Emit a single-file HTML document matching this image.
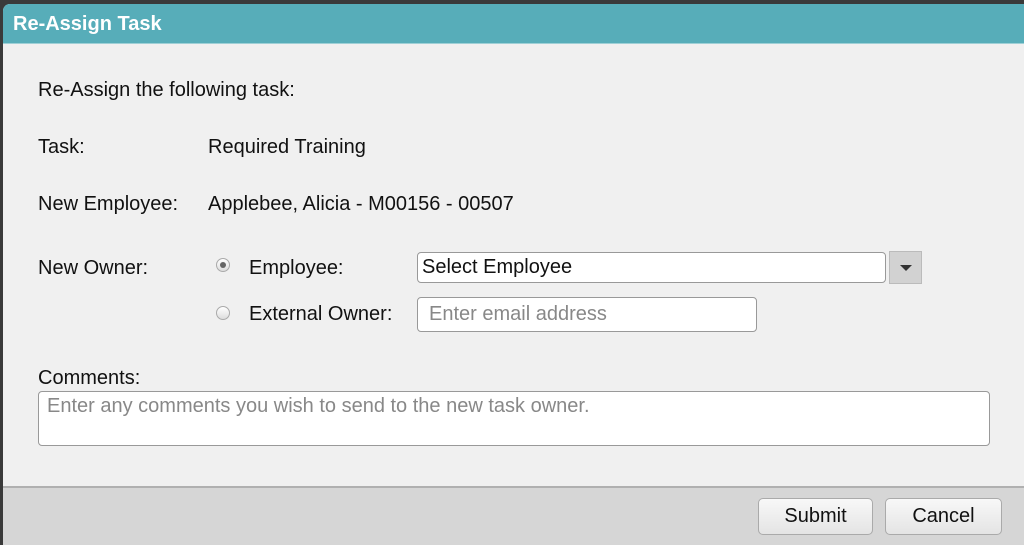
<!DOCTYPE html>
<html><head><style>
body{margin:0;width:1024px;height:545px;background:#3a3a3a;position:relative;overflow:hidden;font-family:"Liberation Sans",sans-serif;color:#111}
.dlg{position:absolute;left:3px;top:4px;width:1021px;height:541px;background:#f0f0f0;border-top-left-radius:7px;overflow:hidden}
.hd{position:absolute;left:0;top:0;right:0;height:39px;background:#57adb9;border-bottom:1px solid #9fd0d6}
.hd span{position:absolute;left:10px;top:9px;color:#fff;font-weight:bold;font-size:20px}
.t{position:absolute;font-size:20px;white-space:nowrap}
.inp{position:absolute;background:#fff;border:1px solid #999;border-radius:4px;box-sizing:border-box;font-size:20px;padding-left:4px}
.rad{position:absolute;width:14px;height:14px;border-radius:50%;border:1px solid #aaa;background:linear-gradient(#fff,#ddd);box-sizing:border-box}
.ft{position:absolute;left:0;right:0;top:482px;bottom:0;background:#d6d6d6;border-top:2px solid #b0b0b0}
.btn{position:absolute;top:10px;height:37px;border:1px solid #aaa;border-radius:5px;background:linear-gradient(#f8f8f8,#e4e4e4);box-sizing:border-box;font-size:20px;text-align:center;line-height:35px}
</style></head><body>
<div class="dlg">
<div class="hd"><span>Re-Assign Task</span></div>
<div class="t" style="left:35px;top:75px">Re-Assign the following task:</div>
<div class="t" style="left:35px;top:132px">Task:</div>
<div class="t" style="left:205px;top:132px">Required Training</div>
<div class="t" style="left:35px;top:189px">New Employee:</div>
<div class="t" style="left:205px;top:189px">Applebee, Alicia - M00156 - 00507</div>
<div class="t" style="left:35px;top:253px">New Owner:</div>
<div class="rad" style="left:213px;top:254px"><div style="width:6px;height:6px;border-radius:50%;background:#666;margin:3px"></div></div>
<div class="t" style="left:246px;top:253px">Employee:</div>
<div class="inp" style="left:414px;top:248px;width:469px;height:31px;line-height:29px">Select Employee</div>
<div style="position:absolute;left:886px;top:247px;width:33px;height:33px;background:#d2d2d2;border:1px solid #bbb;box-sizing:border-box"><div style="position:absolute;left:10px;top:13px;border-left:6px solid transparent;border-right:6px solid transparent;border-top:6px solid #333"></div></div>
<div class="rad" style="left:213px;top:302px"></div>
<div class="t" style="left:246px;top:299px">External Owner:</div>
<div class="inp" style="left:414px;top:293px;width:340px;height:35px;line-height:33px;color:#888;padding-left:11px">Enter email address</div>
<div class="t" style="left:35px;top:363px">Comments:</div>
<div class="inp" style="left:35px;top:387px;width:952px;height:55px;color:#888;padding:3px 8px">Enter any comments you wish to send to the new task owner.</div>
<div class="ft">
<div class="btn" style="left:755px;width:115px">Submit</div>
<div class="btn" style="left:882px;width:117px">Cancel</div>
</div>
</div>
</body></html>
